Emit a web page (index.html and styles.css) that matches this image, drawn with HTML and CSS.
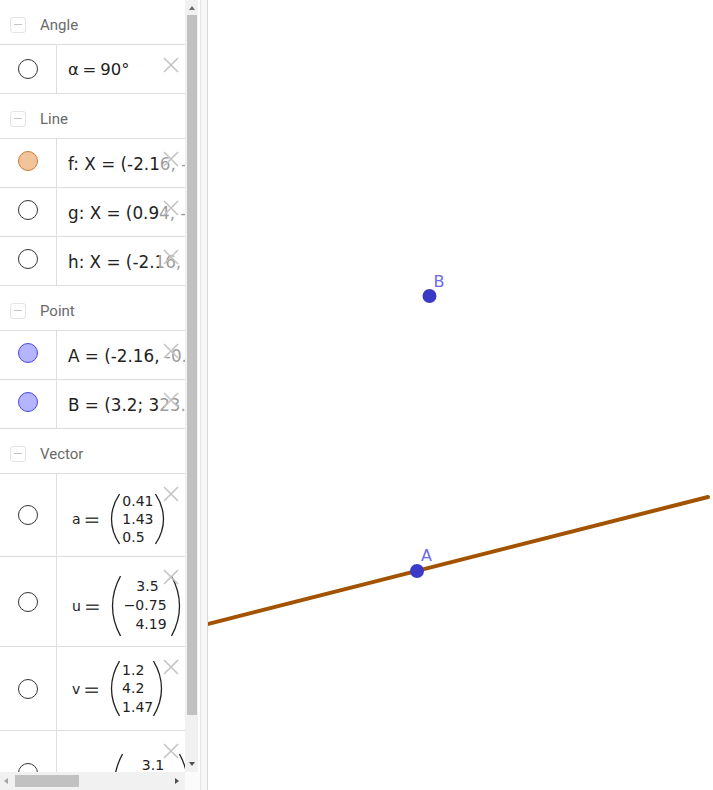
FILE: index.html
```html
<!DOCTYPE html>
<html>
<head>
<meta charset="utf-8">
<link rel="stylesheet" href="styles.css">
</head>
<body>
<div class="app">
  <div class="algebra">
    <div class="av-body">
      <div class="av-list">
        <div class="group"><span class="toggle"></span><span class="group-title">Angle</span></div>
        <div class="item">
          <div class="marble alpha"><span class="dot"></span></div>
          <div class="text big">α = 90°</div>
          <svg class="del" viewBox="0 0 16 16"><path d="M1 1L15 15M15 1L1 15"/></svg>
        </div>

        <div class="group"><span class="toggle"></span><span class="group-title">Line</span></div>
        <div class="item">
          <div class="marble"><span class="dot dot-f"></span></div>
          <div class="text">f: X = (-2.16, -0.25) + λ (3.5, -0.75)</div>
          <span class="fade"></span>
          <svg class="del" viewBox="0 0 16 16"><path d="M1 1L15 15M15 1L1 15"/></svg>
        </div>
        <div class="item">
          <div class="marble"><span class="dot"></span></div>
          <div class="text">g: X = (0.94, -2.3) + λ (1.2, 4.2)</div>
          <span class="fade"></span>
          <svg class="del" viewBox="0 0 16 16"><path d="M1 1L15 15M15 1L1 15"/></svg>
        </div>
        <div class="item">
          <div class="marble"><span class="dot"></span></div>
          <div class="text">h: X = (-2.16, -0.25) + λ (0.41, 1.43)</div>
          <span class="fade"></span>
          <svg class="del" viewBox="0 0 16 16"><path d="M1 1L15 15M15 1L1 15"/></svg>
        </div>

        <div class="group"><span class="toggle"></span><span class="group-title">Point</span></div>
        <div class="item">
          <div class="marble"><span class="dot dot-pt"></span></div>
          <div class="text">A = (-2.16, -0.25, 0)</div>
          <span class="fade"></span>
          <svg class="del" viewBox="0 0 16 16"><path d="M1 1L15 15M15 1L1 15"/></svg>
        </div>
        <div class="item">
          <div class="marble"><span class="dot dot-pt"></span></div>
          <div class="text">B = (3.2; 323.0°; 1.47)</div>
          <span class="fade"></span>
          <svg class="del" viewBox="0 0 16 16"><path d="M1 1L15 15M15 1L1 15"/></svg>
        </div>

        <div class="group"><span class="toggle"></span><span class="group-title">Vector</span></div>
        <div class="item vec vec-a">
          <div class="marble"><span class="dot"></span></div>
          <div class="vec-body">
            <span class="vlabel">a</span><span class="veq">=</span>
            <div class="matrix">
              <svg class="paren" width="10" height="52" viewBox="0 0 10 52"><path d="M9.5 1C3.5 10 1.5 18 1.5 26C1.5 34 3.5 42 9.5 51"/></svg>
              <div class="cells l">
                <span>0.41</span><span>1.43</span><span>0.5</span>
              </div>
              <svg class="paren pr" width="10" height="52" viewBox="0 0 10 52"><path d="M0.5 1C6.5 10 8.5 18 8.5 26C8.5 34 6.5 42 0.5 51"/></svg>
            </div>
          </div>
          <svg class="del" viewBox="0 0 16 16"><path d="M1 1L15 15M15 1L1 15"/></svg>
        </div>
        <div class="item vec vec-u">
          <div class="marble"><span class="dot"></span></div>
          <div class="vec-body">
            <span class="vlabel">u</span><span class="veq">=</span>
            <div class="matrix">
              <svg class="paren" width="10" height="62" viewBox="0 0 10 62"><path d="M9.5 1C3.5 12 1.5 21 1.5 31C1.5 41 3.5 50 9.5 61"/></svg>
              <div class="cells r wide">
                <span class="short">3.5</span><span>−0.75</span><span>4.19</span>
              </div>
              <svg class="paren pr4" width="10" height="62" viewBox="0 0 10 62"><path d="M0.5 1C6.5 12 8.5 21 8.5 31C8.5 41 6.5 50 0.5 61"/></svg>
            </div>
          </div>
          <svg class="del" viewBox="0 0 16 16"><path d="M1 1L15 15M15 1L1 15"/></svg>
        </div>
        <div class="item vec vec-v">
          <div class="marble"><span class="dot"></span></div>
          <div class="vec-body">
            <span class="vlabel">v</span><span class="veq">=</span>
            <div class="matrix">
              <svg class="paren" width="10" height="57" viewBox="0 0 10 57"><path d="M9.5 1C3.5 11 1.5 19 1.5 28.5C1.5 38 3.5 46 9.5 56"/></svg>
              <div class="cells l">
                <span>1.2</span><span>4.2</span><span>1.47</span>
              </div>
              <svg class="paren" width="10" height="57" viewBox="0 0 10 57"><path d="M0.5 1C6.5 11 8.5 19 8.5 28.5C8.5 38 6.5 46 0.5 56"/></svg>
            </div>
          </div>
          <svg class="del" viewBox="0 0 16 16"><path d="M1 1L15 15M15 1L1 15"/></svg>
        </div>
        <div class="item vec vec-w">
          <div class="marble"><span class="dot"></span></div>
          <div class="vec-body">
            <span class="vlabel">w</span><span class="veq">=</span>
            <div class="matrix">
              <svg class="paren" width="10" height="62" viewBox="0 0 10 62"><path d="M9.5 1C3.5 12 1.5 21 1.5 31C1.5 41 3.5 50 9.5 61"/></svg>
              <div class="cells r wide">
                <span class="short2">3.1</span><span>−2.05</span><span>4.43</span>
              </div>
              <svg class="paren pr8" width="10" height="62" viewBox="0 0 10 62"><path d="M0.5 1C6.5 12 8.5 21 8.5 31C8.5 41 6.5 50 0.5 61"/></svg>
            </div>
          </div>
          <svg class="del" viewBox="0 0 16 16"><path d="M1 1L15 15M15 1L1 15"/></svg>
        </div>
      </div>
      <div class="vscroll">
        <span class="arr-up"></span>
        <span class="vthumb"></span>
        <span class="spacer"></span>
        <span class="arr-down"></span>
      </div>
    </div>
    <div class="hbar">
      <div class="hscroll">
        <span class="arr-left"></span>
        <span class="hthumb"></span>
        <span class="spacer"></span>
        <span class="arr-right"></span>
      </div>
      <div class="corner"></div>
    </div>
  </div>
  <div class="splitter"></div>
  <div class="canvas">
    <svg class="board" width="505" height="790" viewBox="0 0 505 790">
      <line x1="-2" y1="624.5" x2="500" y2="497" stroke="#a35200" stroke-width="4" stroke-linecap="round"/>
      <circle cx="221.5" cy="296" r="7" fill="#3a3ac6"/>
      <text x="225.5" y="287" class="plabel">B</text>
      <circle cx="209" cy="571" r="7" fill="#3a3ac6"/>
      <text x="213" y="561" class="plabel">A</text>
    </svg>
  </div>
</div>
</body>
</html>
```

FILE: styles.css
```css
* { box-sizing: border-box; }
html, body { margin: 0; padding: 0; }
body {
  width: 713px;
  height: 790px;
  overflow: hidden;
  background: #fff;
  font-family: "DejaVu Sans", sans-serif;
  color: #333;
}
.app { display: flex; width: 713px; height: 790px; }

.algebra { width: 200px; flex: none; display: flex; flex-direction: column; }
.av-body { display: flex; height: 772px; }
.av-list { width: 185px; overflow: hidden; flex: none; }

.group {
  height: 45px;
  border-bottom: 1px solid #dedede;
  display: flex;
  align-items: center;
  padding-top: 5px;
}
.toggle {
  width: 16px;
  height: 16px;
  margin-left: 10px;
  border: 1px solid #e3e3e3;
  border-radius: 3px;
  display: flex;
  align-items: center;
  justify-content: center;
}
.toggle::before { content: ""; width: 8px; height: 1px; background: #c4c4c4; }
.group-title {
  margin-left: 14px;
  font-family: Roboto, "Open Sans", sans-serif;
  font-size: 15px;
  color: #6a6a6a;
}

.item {
  height: 49px;
  border-bottom: 1px solid #dedede;
  display: flex;
  position: relative;
}
.marble {
  width: 57px;
  flex: none;
  border-right: 1px solid #dedede;
  display: flex;
  align-items: center;
  justify-content: center;
  padding-bottom: 4px;
}
.marble.alpha { padding-bottom: 0; }
.dot {
  width: 20px;
  height: 20px;
  border-radius: 50%;
  border: 1px solid #333;
  background: #fff;
}
.dot-f { background: #f1c49c; border-color: #cc7a36; }
.dot-pt { background: #b4b4ff; border-color: #4848dc; }

.text {
  padding-left: 11px;
  padding-top: 2px;
  display: flex;
  align-items: center;
  white-space: nowrap;
  font-size: 16.8px;
  color: #222;
}
.text.big { font-size: 16.5px; word-spacing: -1.5px; padding-top: 0; }

.fade {
  position: absolute;
  top: 6px;
  right: 0;
  width: 26px;
  height: 36px;
  background: rgba(255, 255, 255, 0.55);
}
.del {
  position: absolute;
  top: 12px;
  right: 6px;
  width: 16px;
  height: 16px;
}
.del path { stroke: #c4c4c4; stroke-width: 1.6; fill: none; }

.vec .marble { padding-bottom: 0; }
.vec-a { height: 83px; }
.vec-u { height: 90px; }
.vec-v { height: 84px; }
.vec-w { height: 84px; }
.vec-body {
  display: flex;
  align-items: center;
  padding-left: 15px;
  white-space: nowrap;
}
.vec-a .vec-body, .vec-u .vec-body { padding-top: 8px; }
.vec-w .vec-body { padding-top: 23px; }
.vlabel { font-size: 14px; color: #222; }
.veq { font-size: 20px; color: #444; margin: 0 10px 0 3px; line-height: 20px; }
.matrix { display: flex; align-items: center; }
.paren { flex: none; }
.paren path { stroke: #222; stroke-width: 1.3; fill: none; }
.cells {
  display: flex;
  flex-direction: column;
  font-size: 14px;
  line-height: 18.3px;
  color: #222;
  margin-left: 2px;
}
.cells.l { align-items: flex-start; }
.cells.r { align-items: flex-end; line-height: 19px; margin-left: 3px; }
.cells .short { padding-right: 8px; }
.cells .short2 { padding-right: 5px; }
.pr { margin-left: 1px; }
.pr4 { margin-left: 4px; }
.pr8 { margin-left: 10px; }

.vscroll {
  width: 15px;
  flex: none;
  background: #f1f1f1;
  border-right: 2px solid #fff;
  display: flex;
  flex-direction: column;
  align-items: center;
}
.arr-up {
  margin-top: 6px;
  width: 0; height: 0;
  border-left: 3.5px solid transparent;
  border-right: 3.5px solid transparent;
  border-bottom: 4px solid #6b6b6b;
}
.vthumb { margin-top: 5px; width: 10px; height: 700px; background: #c1c1c1; }
.spacer { flex: 1; }
.arr-down {
  margin-bottom: 6px;
  width: 0; height: 0;
  border-left: 3.5px solid transparent;
  border-right: 3.5px solid transparent;
  border-top: 4px solid #505050;
}

.hbar { display: flex; height: 18px; }
.hscroll {
  width: 185px;
  background: #f1f1f1;
  display: flex;
  align-items: center;
}
.arr-left {
  margin-left: 4px;
  width: 0; height: 0;
  border-top: 3.5px solid transparent;
  border-bottom: 3.5px solid transparent;
  border-right: 4px solid #a3a3a3;
}
.hthumb { margin-left: 7px; width: 64px; height: 12px; background: #c1c1c1; }
.arr-right {
  margin-right: 6px;
  width: 0; height: 0;
  border-top: 3.5px solid transparent;
  border-bottom: 3.5px solid transparent;
  border-left: 4px solid #505050;
}
.corner { width: 15px; background: #fbfbfb; }

.splitter {
  width: 8px;
  flex: none;
  background: #f7f7f7;
  border-left: 1px solid #e3e3e3;
  border-right: 1px solid #d8d8d8;
}
.canvas { flex: 1; background: #fff; }
.board { display: block; }
.plabel { font-family: "DejaVu Sans", sans-serif; font-size: 16px; fill: #6a6af0; }
```
